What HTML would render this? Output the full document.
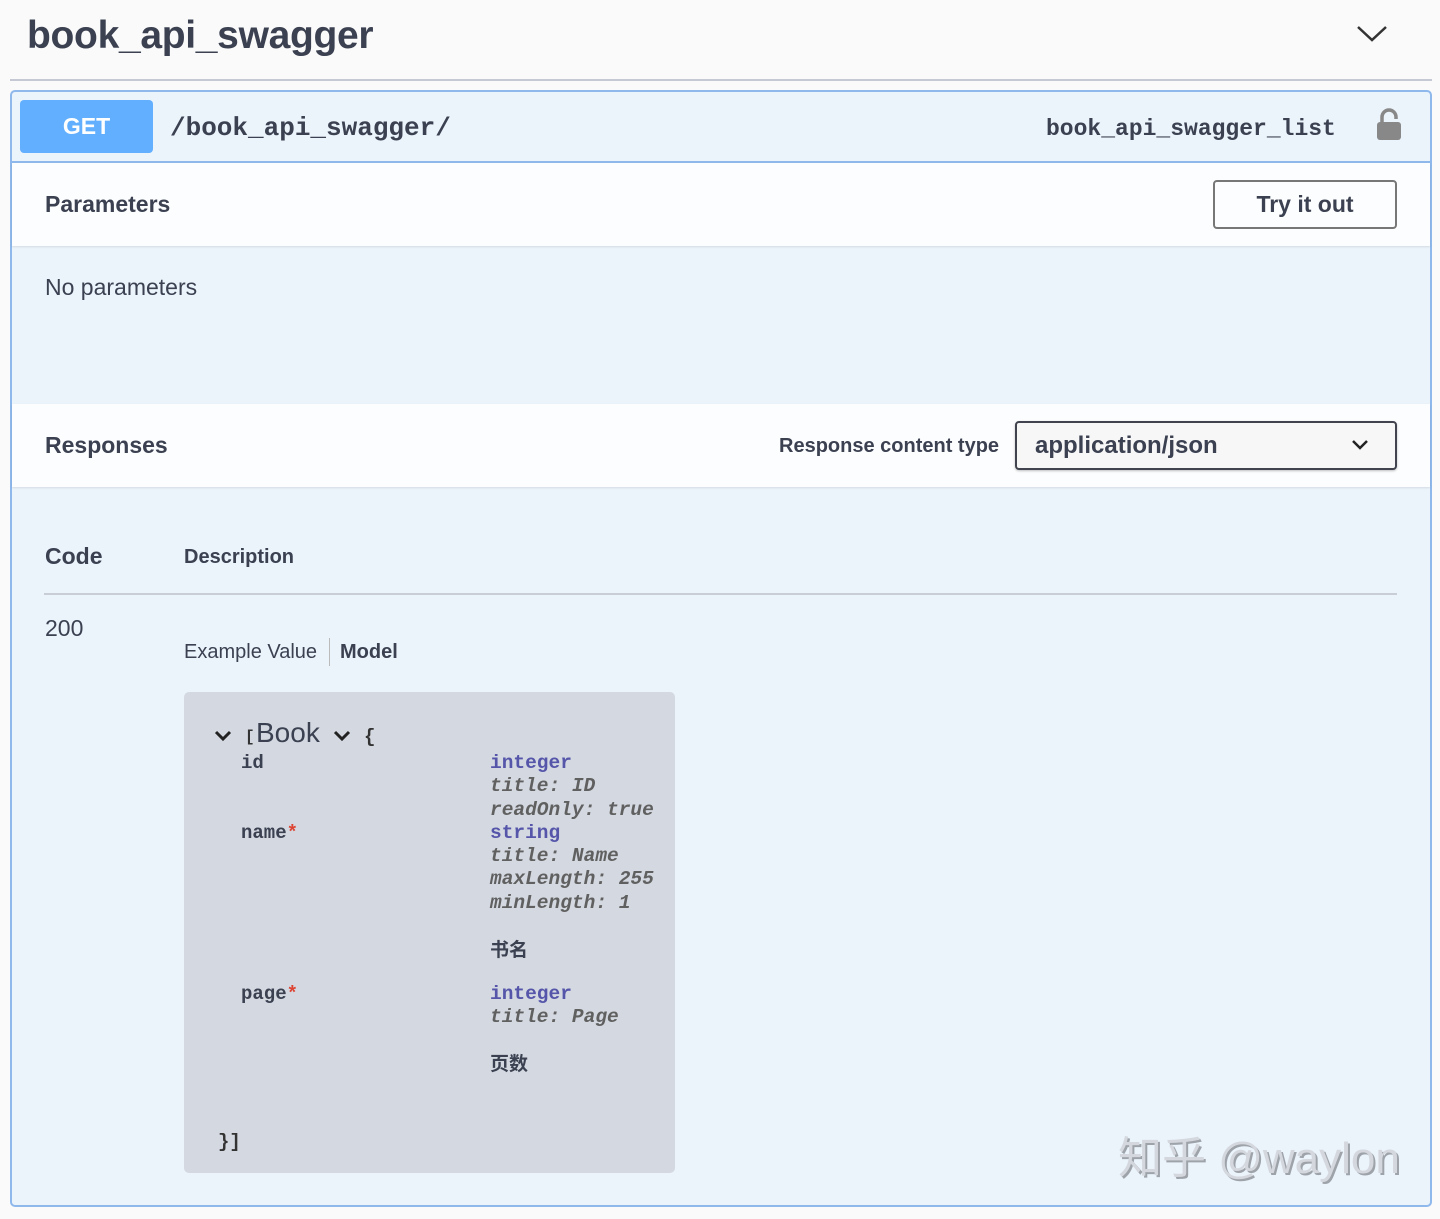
<!DOCTYPE html>
<html><head><meta charset="utf-8"><style>
*{margin:0;padding:0;box-sizing:border-box}
body{width:1440px;height:1219px;background:#fafafa;font-family:"Liberation Sans","Noto Sans CJK SC",sans-serif;color:#3b4151;position:relative;overflow:hidden}
.a{position:absolute;white-space:nowrap}
.mono{font-family:"Liberation Mono","Noto Sans CJK SC",monospace;font-weight:bold}
.it{font-style:italic;color:#606060}
.ty{color:#55a}
</style></head><body>
<div class="a" style="left:27px;top:14px;font-size:39px;font-weight:bold;color:#3b4151;letter-spacing:-0.3px">book_api_swagger</div>
<svg class="a" style="left:1356px;top:24px" width="32" height="20" viewBox="0 0 32 20"><path d="M2 3 L16 16 L30 3" fill="none" stroke="#333" stroke-width="2.5"/></svg>
<div class="a" style="left:10px;top:79px;width:1422px;height:2px;background:#c5c9d3"></div>
<div class="a" style="left:10px;top:90px;width:1422px;height:1117px;background:#ebf3fb;border:2px solid #8fb9ec;border-radius:5px"></div>
<div class="a" style="left:12px;top:161px;width:1418px;height:2px;background:#8fb9ec"></div>
<div class="a" style="left:20px;top:100px;width:133px;height:53px;background:#61affe;border-radius:4px;color:#fff;font-size:23px;font-weight:bold;text-align:center;line-height:53px">GET</div>
<div class="a mono" style="left:170px;top:113px;font-size:26px;color:#3b4151">/book_api_swagger/</div>
<div class="a mono" style="left:1046px;top:116px;font-size:23px;color:#3b4151">book_api_swagger_list</div>
<svg class="a" style="left:1376px;top:108px" width="26" height="34" viewBox="0 0 26 34"><path d="M6 15 V9 a7 7 0 0 1 14 0 V11" fill="none" stroke="#888" stroke-width="3.5"/><rect x="1" y="14" width="24" height="18" rx="3" fill="#888"/></svg>
<div class="a" style="left:12px;top:163px;width:1418px;height:83px;background:#fcfdfe;box-shadow:0 1px 2px rgba(0,0,0,.1)"></div>
<div class="a" style="left:45px;top:191px;font-size:23px;font-weight:bold;color:#3b4151">Parameters</div>
<div class="a" style="left:1213px;top:180px;width:184px;height:49px;border:2px solid #777;border-radius:4px;text-align:center;line-height:45px;font-size:23px;font-weight:bold;color:#3b4151">Try it out</div>
<div class="a" style="left:45px;top:274px;font-size:23px;color:#3b4151">No parameters</div>
<div class="a" style="left:12px;top:404px;width:1418px;height:83px;background:#fcfdfe;box-shadow:0 1px 2px rgba(0,0,0,.1)"></div>
<div class="a" style="left:45px;top:432px;font-size:23px;font-weight:bold;color:#3b4151">Responses</div>
<div class="a" style="left:779px;top:435px;font-size:20px;font-weight:bold;color:#3b4151">Response content type</div>
<div class="a" style="left:1015px;top:421px;width:382px;height:49px;border:2px solid #41444e;border-radius:4px;background:#f7f7f7;box-shadow:0 1px 2px rgba(0,0,0,.25)"></div>
<div class="a" style="left:1035px;top:432px;font-size:24px;font-weight:bold;color:#3b4151">application/json</div>
<svg class="a" style="left:1351px;top:439px" width="18" height="12" viewBox="0 0 18 12"><path d="M2 2 L9 9 L16 2" fill="none" stroke="#222" stroke-width="2.5"/></svg>
<div class="a" style="left:45px;top:543px;font-size:23px;font-weight:bold;color:#3b4151">Code</div>
<div class="a" style="left:184px;top:546px;font-size:20px;font-weight:bold;color:#3b4151">Description</div>
<div class="a" style="left:44px;top:593px;width:1353px;height:2px;background:#c9ced6"></div>
<div class="a" style="left:45px;top:615px;font-size:23px;color:#3b4151">200</div>
<div class="a" style="left:184px;top:641px;font-size:20px;color:#3b4151">Example Value</div>
<div class="a" style="left:329px;top:638px;width:1px;height:28px;background:#bbb"></div>
<div class="a" style="left:340px;top:641px;font-size:20px;font-weight:bold;color:#3b4151">Model</div>
<div class="a" style="left:184px;top:692px;width:491px;height:481px;background:#d4d9e1;border-radius:5px"></div>
<svg class="a" style="left:213px;top:729px" width="20" height="14" viewBox="0 0 20 14"><path d="M3 3 L10 10 L17 3" fill="none" stroke="#222" stroke-width="3"/></svg>
<div class="a mono" style="left:245px;top:728px;font-size:16px;color:#333">[</div>
<div class="a" style="left:256px;top:717px;font-size:28px;color:#3b4151">Book</div>
<svg class="a" style="left:332px;top:729px" width="20" height="14" viewBox="0 0 20 14"><path d="M3 3 L10 10 L17 3" fill="none" stroke="#222" stroke-width="3"/></svg>
<div class="a mono" style="left:364px;top:726px;font-size:19px;color:#333">{</div>
<div class="a mono" style="left:241px;top:752px;font-size:19px;line-height:23px">id</div>
<div class="a mono" style="left:241px;top:822px;font-size:19px;line-height:23px">name<span style="color:#d43">*</span></div>
<div class="a mono" style="left:241px;top:983px;font-size:19px;line-height:23px">page<span style="color:#d43">*</span></div>
<div class="a mono" style="left:490px;top:752px;font-size:19.5px;line-height:23.3px"><span class="ty">integer</span><br><span class="it">title: ID</span><br><span class="it">readOnly: true</span><br><span class="ty">string</span><br><span class="it">title: Name</span><br><span class="it">maxLength: 255</span><br><span class="it">minLength: 1</span></div>
<div class="a" style="left:490px;top:935px;font-size:19px;font-weight:bold;color:#3b4151">书名</div>
<div class="a mono" style="left:490px;top:983px;font-size:19.5px;line-height:23.3px"><span class="ty">integer</span><br><span class="it">title: Page</span></div>
<div class="a" style="left:490px;top:1049px;font-size:19px;font-weight:bold;color:#3b4151">页数</div>
<div class="a mono" style="left:218px;top:1131px;font-size:19px;color:#333">}]</div>
<div class="a" style="left:1118px;top:1122px;font-size:44px;color:#d4d8de;text-shadow:2px 2px 0 #9ea3aa">知乎 @waylon</div>
</body></html>
